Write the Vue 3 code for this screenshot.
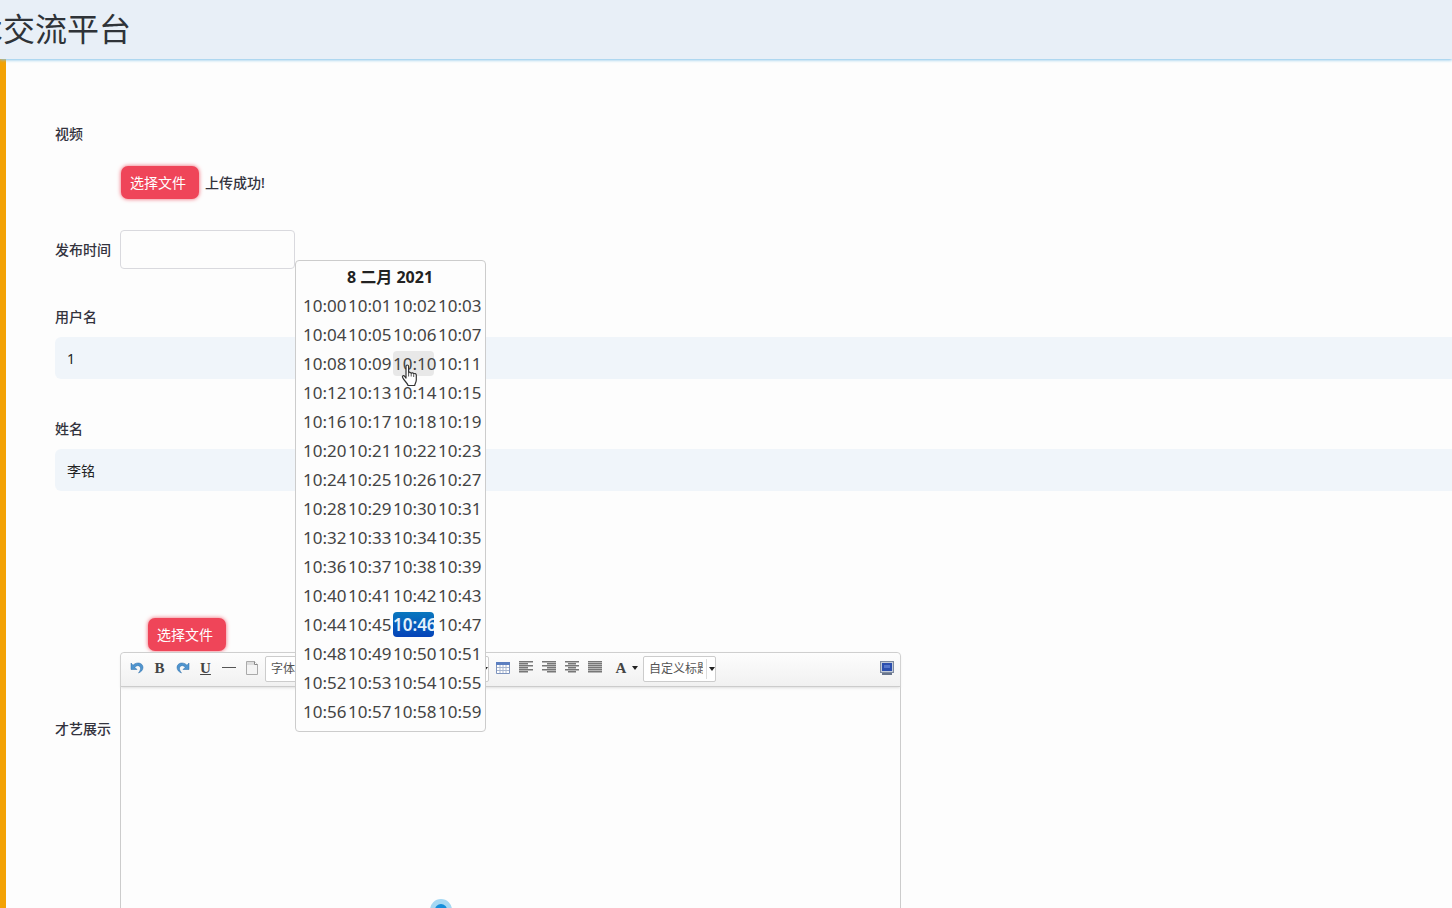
<script setup>
import { ref } from 'vue'

const publishTime = ref('')
const username = ref('1')
const realName = ref('李铭')
const selected = ref('10:46')
const hovered = ref('10:10')

const rows = Array.from({ length: 15 }, (_, r) =>
  Array.from({ length: 4 }, (_, c) => '10:' + String(r * 4 + c).padStart(2, '0'))
)

const aligns = [
  { name: '左对齐', lines: [[0, 14], [0, 9], [0, 14], [0, 9], [0, 14], [0, 9]] },
  { name: '右对齐', lines: [[0, 14], [5, 9], [0, 14], [5, 9], [0, 14], [5, 9]] },
  { name: '居中', lines: [[0, 14], [3, 8], [0, 14], [3, 8], [0, 14], [3, 8]] },
  { name: '两端对齐', lines: [[0, 14], [0, 14], [0, 14], [0, 14], [0, 14], [0, 14]] }
]
</script>

<template>
  <div class="page">
    <header class="top">
      <h1>艺术交流平台</h1>
    </header>
    <main class="content">
      <form class="form" @submit.prevent>
        <div class="caption">视频</div>
        <div class="upload">
          <button type="button" class="pick">选择文件</button>
          <span class="status">上传成功!</span>
        </div>

        <div class="date-row">
          <label for="time">发布时间</label>
          <div class="date-field">
            <input id="time" v-model="publishTime" type="text" />
            <div class="picker">
              <table>
                <thead>
                  <tr><th colspan="4">8 二月 2021</th></tr>
                </thead>
                <tbody>
                  <tr v-for="row in rows" :key="row[0]">
                    <td v-for="t in row" :key="t">
                      <button
                        type="button"
                        :class="{ selected: t === selected, hovered: t === hovered }"
                        @click="selected = t"
                        @mouseenter="hovered = t"
                      >{{ t }}</button>
                    </td>
                  </tr>
                </tbody>
              </table>
              <svg class="pointer" width="18" height="24" viewBox="0 0 18 24" aria-hidden="true">
                <path d="M5 2.2c0-1.6 2.6-1.6 2.6 0V9c.4-1.2 2.4-1 2.6.4.5-1 2.2-.8 2.5.6.7-.9 2.5-.5 2.6 1v5c0 2.500-1.600 3.600-1.600 5.500H7c0-2-4.300-5-5.500-8.200-.5-1.500 1.200-2.200 2.200-.9L5 14z" fill="#fff" stroke="#333" stroke-width="1.200" stroke-linejoin="round" />
                <path d="M7.600 8.500v4M10.200 9.500v3M12.700 10.500v2.500" stroke="#555" fill="none" />
              </svg>
            </div>
          </div>
        </div>

        <div class="block">
          <label for="user">用户名</label>
          <input id="user" v-model="username" type="text" />
        </div>
        <div class="block">
          <label for="real">姓名</label>
          <input id="real" v-model="realName" type="text" />
        </div>

        <div class="show-row">
          <span class="show-label">才艺展示</span>
          <div class="show-body">
            <button type="button" class="pick inset">选择文件</button>
            <div class="editor">
              <div class="toolbar">
                <button type="button" class="tool" aria-label="撤销">
                  <svg width="14" height="14" viewBox="0 0 14 14"><path d="M1 2v6.500h6L4.800 6.300C7 3.500 10.500 4.500 10.500 7.500c0 1.800-1 3-2 4.500 2.500-1 4.500-2.800 4.500-5.500C13 2 7 .2 3 4.200z" fill="#4f95cf" stroke="#2d6da8" stroke-width=".5" /></svg>
                </button>
                <button type="button" class="tool serif">B</button>
                <button type="button" class="tool" aria-label="重做">
                  <svg width="14" height="14" viewBox="0 0 14 14"><path d="M13 2v6.500H7l2.200-2.200C7 3.500 3.500 4.500 3.500 7.500c0 1.800 1 3 2 4.500C3 11 1 9.200 1 6.500 1 2 7 .2 11 4.200z" fill="#4f95cf" stroke="#2d6da8" stroke-width=".5" /></svg>
                </button>
                <button type="button" class="tool serif underline">U</button>
                <button type="button" class="tool" aria-label="分隔线">
                  <svg width="14" height="14" viewBox="0 0 14 14"><path d="M0 6.500h14" stroke="#555" /></svg>
                </button>
                <button type="button" class="tool" aria-label="新建">
                  <svg width="14" height="14" viewBox="0 0 14 14"><path d="M1.500.5h8l3 3v10h-11z" fill="#f4f4f4" stroke="#aaa" /><path d="M2 1h7v3H2z" fill="#ddd" /><path d="M9.500.5v3h3" fill="#fff" stroke="#888" /></svg>
                </button>
                <span class="select font">
                  <select aria-label="字体"><option>字体</option></select>
                  <svg width="6" height="4" viewBox="0 0 6 4"><path d="M0 0h6L3 4z" fill="#222" /></svg>
                </span>
                <button type="button" class="tool" aria-label="表格">
                  <svg width="14" height="14" viewBox="0 0 14 14"><path d="M.5 1.500h13v11H.5z" fill="#fff" stroke="#7d93bd" /><path d="M0 1h14v3H0z" fill="#5c7fc0" /><path d="M4 4v8M7 4v8M10 4v8M1 6.500h12M1 9.500h12" stroke="#a9b7d0" /></svg>
                </button>
                <button v-for="a in aligns" :key="a.name" type="button" class="tool" :aria-label="a.name">
                  <svg width="14" height="14" viewBox="0 0 14 14">
                    <rect v-for="(l, i) in a.lines" :key="i" :x="l[0]" :y="i * 2" :width="l[1]" height="1.500" fill="#777" />
                  </svg>
                </button>
                <button type="button" class="tool serif color">
                  A
                  <svg width="6" height="4" viewBox="0 0 6 4"><path d="M0 0h6L3 4z" fill="#222" /></svg>
                </button>
                <span class="select heading">
                  <select aria-label="自定义标题"><option>自定义标题</option></select>
                  <svg width="6" height="4" viewBox="0 0 6 4"><path d="M0 0h6L3 4z" fill="#222" /></svg>
                </span>
                <button type="button" class="tool screen" aria-label="全屏">
                  <svg width="14" height="14" viewBox="0 0 14 14"><rect x=".5" y=".5" width="13" height="11" fill="#c4ccd8" stroke="#7f8ba0" /><rect x="2" y="2" width="10" height="8" fill="#2c4fae" /><path d="M4 4h6v3H4z" fill="#5677cc" /><path d="M2 13h10" stroke="#68758c" stroke-width="2" /></svg>
                </button>
              </div>
              <div class="canvas" contenteditable="true" role="textbox" aria-label="才艺展示"></div>
            </div>
          </div>
        </div>
      </form>
    </main>
    <span class="marker"></span>
  </div>
</template>

<style>
body {
  overflow: hidden;
}
</style>

<style scoped>
.page {
  position: relative;
  display: flex;
  flex-direction: column;
  height: 100vh;
  overflow: hidden;
  background: #fdfdfd;
  color: #333;
  font: 14px/20px "Noto Sans", "Noto Sans CJK SC", sans-serif;
}
.page * {
  box-sizing: border-box;
}
button,
input,
select {
  font: inherit;
  color: inherit;
}
.top {
  flex: none;
  height: 59px;
  overflow: hidden;
  background: #e8eff7;
  box-shadow: 0 1px 3px #7fc0e8;
  z-index: 1;
}
h1 {
  margin: 0 0 0 -61px;
  font-size: 32px;
  line-height: 58px;
  font-weight: 400;
  white-space: nowrap;
  color: #2f3338;
}
.content {
  flex: 1;
  min-height: 0;
  border-left: 6px solid #f3a204;
  padding: 65px 0 0 49px;
}
.caption,
label,
.status,
.show-label {
  font-weight: 500;
  color: #33333d;
}
.upload {
  display: flex;
  align-items: center;
  gap: 6px;
  margin: 22px 0 31px 66px;
}
.pick {
  display: block;
  width: 78px;
  height: 33px;
  padding: 0 4px 0 0;
  border: 0;
  border-radius: 7px;
  background: #ef4559;
  box-shadow: 0 0 4px #f0606f;
  color: #fff;
}
.date-row {
  display: flex;
  align-items: center;
}
.date-row label {
  width: 65px;
}
.date-field {
  position: relative;
  width: 175px;
}
.date-field input {
  display: block;
  width: 100%;
  height: 39px;
  padding: 0 10px;
  border: 1px solid #d9d9de;
  border-radius: 4px;
  background: #fdfdfd;
}
.picker {
  position: absolute;
  z-index: 2;
  left: 175px;
  top: 30px;
  width: 191px;
  padding: 2px 4px 5px 7px;
  border: 1px solid #ccc;
  border-radius: 4px;
  background: #fdfdfd;
}
.picker table {
  width: 180px;
  table-layout: fixed;
  border-collapse: collapse;
}
.picker th {
  height: 28px;
  padding: 0 6px 0 0;
  font-size: 16px;
  line-height: 28px;
  color: #222;
}
.picker td {
  height: 29px;
  padding: 0;
}
.picker button {
  display: block;
  width: 41px;
  height: 25px;
  padding: 0;
  border: 0;
  border-radius: 4px;
  background: none;
  font-size: 17px;
  line-height: 25px;
  text-align: left;
  white-space: nowrap;
  color: #444;
}
.picker .hovered {
  background: #e8e8e8;
}
.picker .selected {
  overflow: hidden;
  background: linear-gradient(#0877be, #0442b8);
  font-weight: 600;
  color: #e4f1fb;
}
.pointer {
  position: absolute;
  left: 105px;
  top: 103px;
}
.block {
  margin-top: 38px;
}
.block + .block {
  margin-top: 40px;
}
.block label {
  display: block;
  margin-bottom: 10px;
}
.block input {
  display: block;
  width: 100%;
  height: 42px;
  padding: 0 12px;
  border: 0;
  border-radius: 6px 0 0 6px;
  background: #f0f5fa;
  color: #222;
}
.show-row {
  display: flex;
  margin-top: 127px;
}
.show-label {
  flex: none;
  width: 65px;
  padding-top: 101px;
}
.show-body {
  flex: none;
  width: 781px;
}
.inset {
  margin-left: 28px;
}
.editor {
  margin-top: 1px;
  border: 1px solid #ccc;
  border-radius: 4px 4px 0 0;
}
.toolbar {
  display: flex;
  align-items: center;
  height: 34px;
  padding: 0 2px 4px 4px;
  border-bottom: 1px solid #ccc;
  border-radius: 4px 4px 0 0;
  background: linear-gradient(#fdfdfd, #f1f1f1);
  box-shadow: 0 1px 3px #ddd;
}
.tool {
  display: flex;
  flex: none;
  align-items: center;
  justify-content: center;
  width: 23px;
  height: 22px;
  padding: 0;
  border: 0;
  background: none;
}
.serif {
  font: bold 15px/20px "Liberation Serif", serif;
  color: #444;
}
.underline {
  text-decoration: underline;
}
.color {
  width: 35px;
  padding-left: 7px;
  gap: 6px;
}
.screen {
  margin-left: auto;
}
.select {
  position: relative;
  align-self: flex-start;
  margin: 3px 2px 0;
}
.select select {
  display: block;
  width: 100%;
  height: 26px;
  padding: 0 12px 0 5px;
  border: 1px solid #ccc;
  border-radius: 2px;
  background: #fff;
  appearance: none;
  font-size: 12px;
  color: #555;
}
.select svg {
  position: absolute;
  right: 1px;
  top: 11px;
}
.font {
  width: 224px;
}
.heading {
  width: 73px;
}
.heading::after {
  content: "";
  position: absolute;
  right: 9px;
  top: 3px;
  height: 20px;
  border-left: 1px solid #ddd;
}
.canvas {
  height: 300px;
  outline: 0;
}
.marker {
  position: absolute;
  left: 430px;
  bottom: -13px;
  width: 22px;
  height: 22px;
  border: 5px solid #a5d8f3;
  border-radius: 50%;
  background: #168edb;
}
</style>
